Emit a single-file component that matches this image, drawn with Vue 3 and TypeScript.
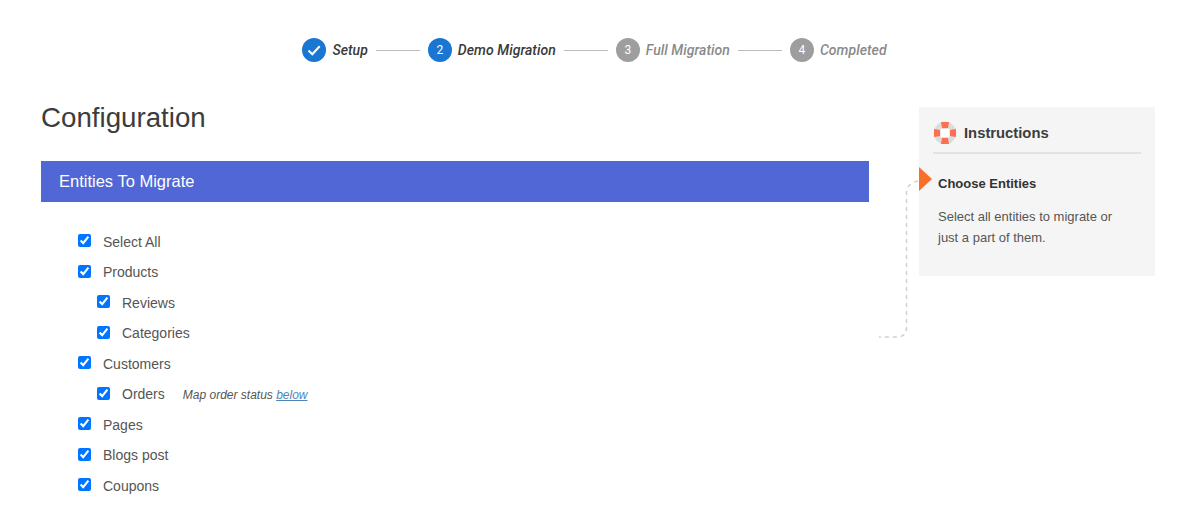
<template>
  <div class="page">
    <div class="steps">
      <template v-for="(step, index) in steps" :key="step.label">
        <div v-if="index > 0" class="line"></div>
        <div :class="['step', { active: step.active }]">
          <span class="dot">
            <svg v-if="step.done" width="24" height="24" viewBox="0 0 24 24">
              <path d="M6.500 12.500l3.800 3.800 7.400-8" fill="none" stroke="#fff" stroke-width="2" />
            </svg>
            <template v-else>{{ index + 1 }}</template>
          </span>
          <span class="step-label">{{ step.label }}</span>
        </div>
      </template>
    </div>

    <div class="content">
      <main class="main">
        <h1>Configuration</h1>
        <div class="bar">Entities To Migrate</div>
        <ul class="entities">
          <li v-for="item in entities" :key="item.label" :class="{ child: item.child }">
            <input type="checkbox" checked />
            <span class="name">{{ item.label }}</span>
            <span v-if="item.note" class="note">Map order status <a href="#">below</a></span>
          </li>
        </ul>
      </main>

      <aside class="side">
        <svg class="connector" width="42" height="162" viewBox="0 0 42 162">
          <path d="M39 1C33 2 27.500 6 27.500 13V147C27.500 154 24 157 18 157H0" fill="none" stroke="#cfcfcf" stroke-width="1.500" stroke-dasharray="4 4" />
        </svg>
        <div class="card">
          <span class="arrow"></span>
          <div class="card-head">
            <svg width="24" height="24" viewBox="0 0 24 24">
              <circle cx="12" cy="12" r="11" fill="#fff" />
              <circle cx="12" cy="12" r="8.500" fill="none" stroke="#dcdcdc" stroke-width="5.500" />
              <path d="M8 1h8l-1 6.200H9zM9 16.800h6l1 6.200H8zM1 8l6.200 1v6L1 16zM16.800 9L23 8v8l-6.200-1z" fill="#fb7053" />
            </svg>
            <span>Instructions</span>
          </div>
          <div class="card-body">
            <h3>Choose Entities</h3>
            <p>Select all entities to migrate or just a part of them.</p>
          </div>
        </div>
      </aside>
    </div>
  </div>
</template>

<script setup lang="ts">
type Step = {
  label: string
  done?: boolean
  active?: boolean
}

type Entity = {
  label: string
  child?: boolean
  note?: boolean
}

const steps: Step[] = [
  { label: 'Setup', done: true, active: true },
  { label: 'Demo Migration', active: true },
  { label: 'Full Migration' },
  { label: 'Completed' },
]

const entities: Entity[] = [
  { label: 'Select All' },
  { label: 'Products' },
  { label: 'Reviews', child: true },
  { label: 'Categories', child: true },
  { label: 'Customers' },
  { label: 'Orders', child: true, note: true },
  { label: 'Pages' },
  { label: 'Blogs post' },
  { label: 'Coupons' },
]
</script>

<style>
body {
  background: #fff;
  overflow: hidden;
}
</style>

<style scoped>
.page {
  height: 524px;
  overflow: hidden;
  font-family: 'Liberation Sans', Arial, sans-serif;
  color: #555;
}

.steps {
  display: flex;
  align-items: center;
  justify-content: center;
  gap: 8px;
  height: 24px;
  padding-top: 38px;
  padding-right: 11px;
}

.step {
  display: flex;
  align-items: center;
  gap: 6px;
  font-family: Roboto, sans-serif;
  font-size: 14px;
  font-style: italic;
  color: #8a8a8a;
  font-weight: 500;
}

.step.active {
  color: #3a3a3a;
}

.step-label {
  letter-spacing: 0.05px;
}

.dot {
  display: flex;
  align-items: center;
  justify-content: center;
  width: 24px;
  height: 24px;
  border-radius: 50%;
  background: #9e9e9e;
  color: #fff;
  font-size: 12px;
  font-style: normal;
  font-weight: 400;
}

.active .dot {
  background: #1976d2;
}

.line {
  width: 44px;
  height: 1px;
  background: #bdbdbd;
}

.content {
  display: flex;
  padding: 0 45px 0 41px;
  margin-top: 37px;
}

.main {
  width: 828px;
}

h1 {
  margin: 0;
  height: 62px;
  font-size: 27.700px;
  line-height: 38px;
  font-weight: 400;
  color: #3c3c3c;
}

.bar {
  height: 41px;
  padding-left: 18px;
  background: #5067d5;
  color: #fff;
  font-size: 16.500px;
  line-height: 40px;
}

.entities {
  list-style: none;
  margin: 0;
  padding: 24.700px 0 0 37px;
}

.entities li {
  display: flex;
  align-items: center;
  height: 30.500px;
  font-size: 14px;
}

.entities li.child {
  padding-left: 19px;
}

input {
  width: 13px;
  height: 13px;
  margin: 0 12px 2px 0;
  accent-color: #0075ff;
}

.note {
  margin-left: 18px;
  font-size: 12px;
  font-style: italic;
  position: relative;
  top: 1px;
}

.note a {
  color: #4f86b8;
}

.side {
  position: relative;
  margin-left: 50px;
  margin-top: 8px;
  width: 236px;
}

.connector {
  position: absolute;
  left: -40px;
  top: 73px;
}

.card {
  position: relative;
  height: 169px;
  padding: 14px 14px 0;
  box-sizing: border-box;
  background: #f5f5f5;
}

.arrow {
  position: absolute;
  left: 0;
  top: 60px;
  border-left: 13px solid #fa7028;
  border-top: 12px solid transparent;
  border-bottom: 12px solid transparent;
}

.card-head {
  display: flex;
  align-items: center;
  gap: 7px;
  height: 24px;
  padding-bottom: 7px;
  border-bottom: 2px solid #e2e2e2;
  font-weight: 700;
  color: #3c3c3c;
}

.card-head span {
  font-size: 14.800px;
}

.card-body {
  padding: 0 5px;
}

h3 {
  margin: 23px 0 0;
  font-size: 13px;
  line-height: 14px;
  color: #333;
}

p {
  margin: 15px 0 0;
  max-width: 185px;
  font-size: 13px;
  line-height: 21px;
  color: #555;
}
</style>
